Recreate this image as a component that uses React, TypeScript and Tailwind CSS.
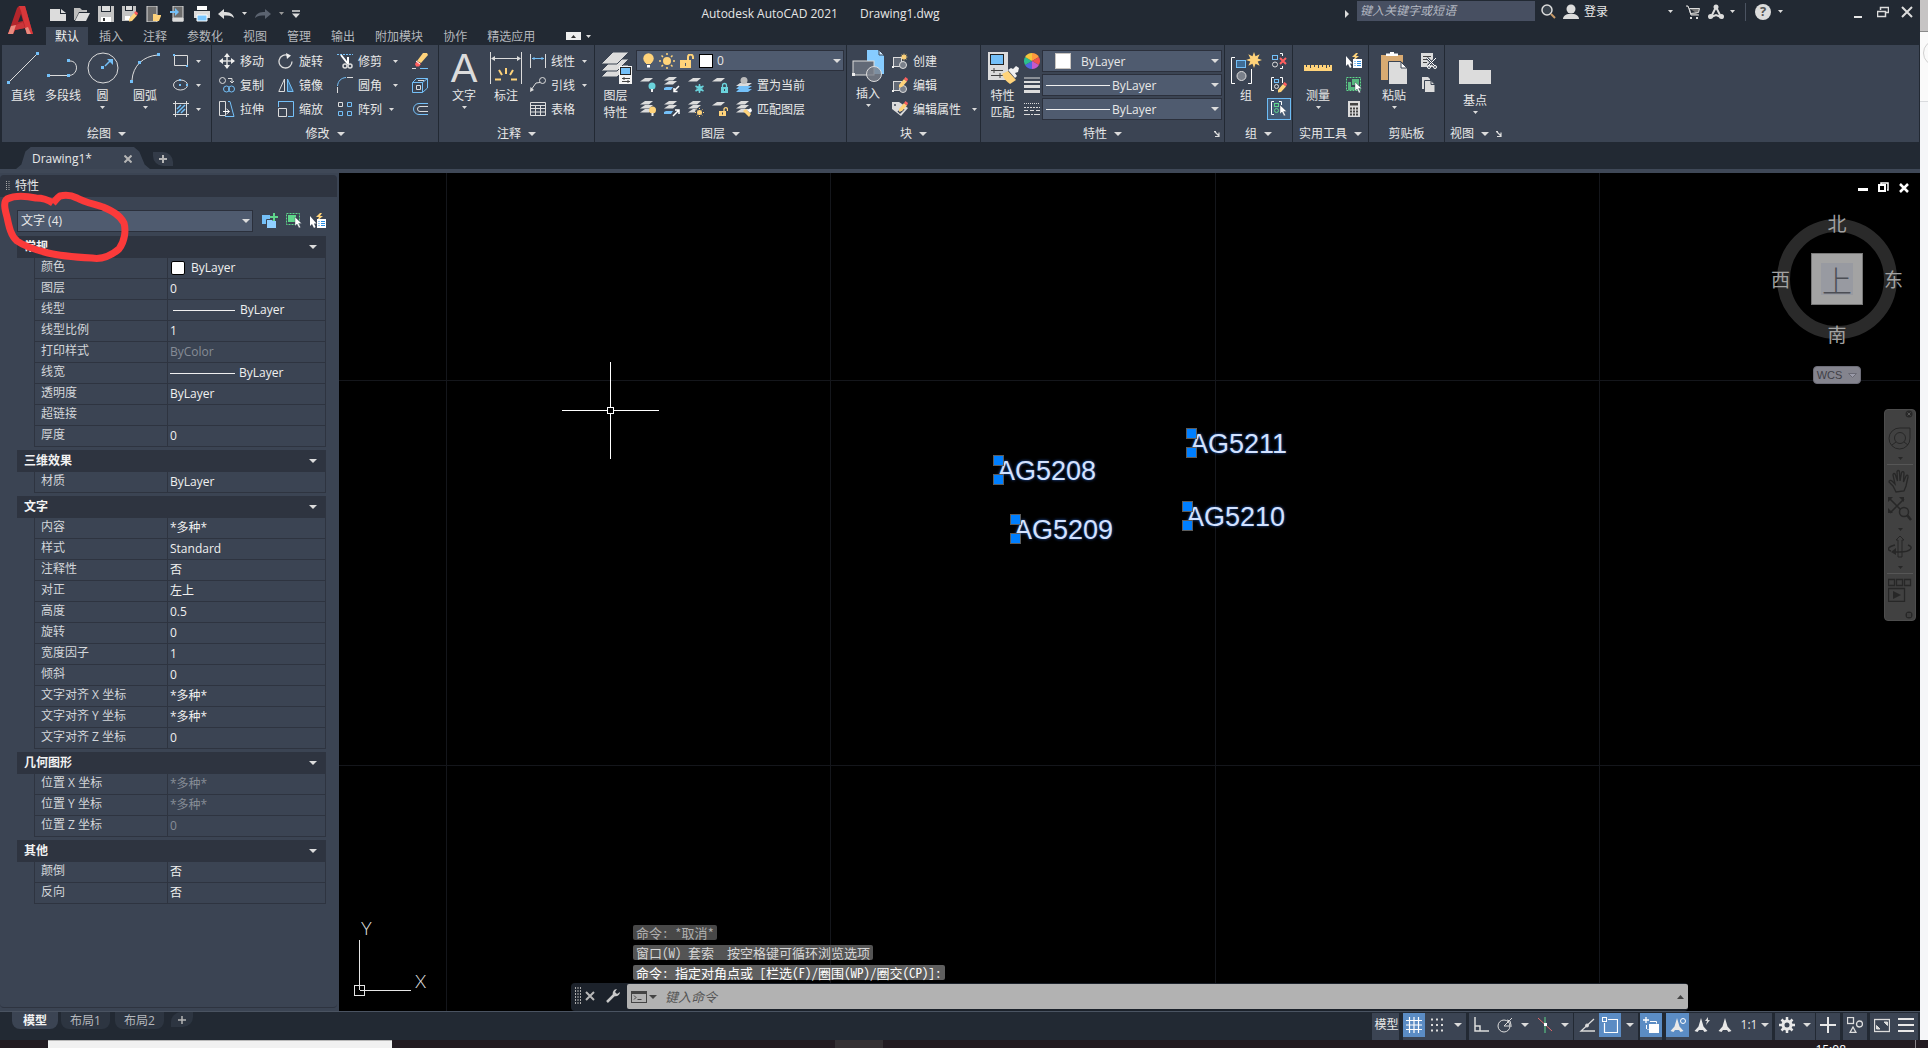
import React, { ReactNode } from 'react';

const W = '#dcdcdc';
const B = '#74c0f8';
const Y = '#ffd37a';
const G = '#5fd68b';
const R = '#ff5f5f';
const C = '#6ad3dc';

/* ---------- shared pieces ---------- */

function Ico({ children, size = 16, vb }: { children: ReactNode; size?: number; vb?: string }) {
  return (
    <svg width={size} height={size} viewBox={vb || `0 0 ${size} ${size}`} fill="none" stroke={W} strokeWidth="1" className="shrink-0" aria-hidden="true">
      {children}
    </svg>
  );
}

function Caret({ big = false, color = W }: { big?: boolean; color?: string }) {
  return big ? (
    <svg width="8" height="4" viewBox="0 0 8 4" className="shrink-0" aria-hidden="true"><path d="M0 0h8L4 4z" fill={color} /></svg>
  ) : (
    <svg width="5" height="3" viewBox="0 0 5 3" className="shrink-0" aria-hidden="true"><path d="M0 0h5L2.500 3z" fill={color} /></svg>
  );
}

function Big({ icon, lines, caret, w, pad = 'pt-[3px]' }: { icon: ReactNode; lines: string[]; caret?: boolean; w: string; pad?: string }) {
  return (
    <button type="button" className={`flex shrink-0 flex-col items-center ${w} ${pad}`}>
      {icon}
      <span className="mt-[3px] flex flex-col leading-[17px] whitespace-nowrap">
        {lines.map((l) => <span key={l}>{l}</span>)}
      </span>
      {caret && <span className="mt-[2px] flex"><Caret /></span>}
    </button>
  );
}

function Small({ icon, label, caret, wide, name }: { icon: ReactNode; label?: string; caret?: boolean; wide?: boolean; name?: string }) {
  return (
    <button type="button" aria-label={label || name} className="flex h-6 items-center gap-[5px] whitespace-nowrap">
      {icon}
      {label && <span className="pt-[2px]">{label}</span>}
      {caret && <span className={wide ? 'ml-1.5 flex' : 'ml-[2px] flex'}><Caret /></span>}
    </button>
  );
}

function Launcher() {
  return (
    <Ico size={6}><path d="M0 .5h2M.5 .5l4 4M5 1.500v4H1" strokeWidth="1.200" /></Ico>
  );
}

function Panel({ title, w, children, caret = true, launcher, left }: { title: string; w: string; children: ReactNode; caret?: boolean; launcher?: boolean; left?: boolean }) {
  return (
    <section className={`relative flex flex-col bg-[#3b4453] ${w}`}>
      <div className="flex h-[76px] pt-1">{children}</div>
      <div className={`flex h-[21px] items-center gap-[7px] pt-[4px] ${left ? 'pl-[5px]' : 'justify-center'}`}>
        <button type="button" className="flex items-center gap-[7px]">
          {title}
          {caret && <Caret big />}
        </button>
        {launcher && <span className={left ? 'flex' : 'absolute right-1 bottom-[5px]'}><Launcher /></span>}
      </div>
    </section>
  );
}

/* ---------- small drawings ---------- */

const sheet = (y: number, c: string = W, x = 0) => <path d={`M${x + 5} ${y}h8l-4 3.500H${x}z`} fill={c} stroke="none" />;
const pencil = (
  <g stroke="none"><path d="M7 13l5-6 3 2.500-5 5.500-3 .5z" fill={Y} /><path d="M12 7l1.500-2L16 7l-1 2.500z" fill={R} /></g>
);
const cursor = (x: number, y: number) => (
  <path d={`M${x} ${y}v9l2-2 2 4 1.500-.8-1.800-3.700h3z`} fill="#fff" stroke="#3b4453" strokeWidth=".4" />
);
const star = (cx: number, cy: number, r: number, c = Y) => {
  const pts: string[] = [];
  for (let i = 0; i < 16; i++) {
    const a = (i * Math.PI) / 8;
    const q = i % 2 ? r * 0.5 : r;
    pts.push(`${(cx + q * Math.sin(a)).toFixed(2)},${(cy - q * Math.cos(a)).toFixed(2)}`);
  }
  return <polygon points={pts.join(' ')} fill={c} stroke="none" />;
};
const dot = (x: number, y: number, s = 3, c = B) => <rect x={x} y={y} width={s} height={s} fill={c} stroke="none" />;

const QuickSelect = (
  <Ico><path d="M10 0L6 4h3L7 8l6-5h-3l2-3z" fill={Y} stroke="none" /><path d="M0 3v10l2-2 2 4 1.500-1-1.500-3.500h2.500z" fill="#fff" stroke="none" /><rect x="7" y="6" width="9" height="9" fill="#fff" stroke="none" /><path d="M8.500 8.500h1M8.500 10.500h1M8.500 12.500h1M11 8.500h4M11 10.500h4M11 12.500h4" stroke="#2b8de0" /></Ico>
);

const Brush = <g stroke="none"><path d="M15 22l6-3 8 9-6 4c-3-2-6-5-8-10z" fill={Y} /><path d="M21 18l3-2 2 1 3-3 3 2-1 4-3 1 2 3-2 2z" fill="#f1f1f1" /></g>;

/* ---------- title bar ---------- */

function TitleBar() {
  const quick: [string, ReactNode][] = [
    ['新建', <Ico><path d="M0 3h10v5h6v7H0z M11 3l5 4h-5z" fill={W} stroke="none" /></Ico>],
    ['打开', <Ico><path d="M0 2h6l2 2h5v2H5l-4 8H0z" fill="#bdbdbd" stroke="none" /><path d="M5 7h11l-4 8H1z" fill={W} stroke="none" /></Ico>],
    ['保存', <Ico><path d="M0 0h3v6h10V0h3v16H0z" fill="#c4c4c4" stroke="none" /><path d="M4 0h8v5H4z" fill={W} stroke="none" /><path d="M3 11h10v5H3z" fill="#fff" stroke="none" /><path d="M5 12h2v3H5z" fill="#333" stroke="none" /></Ico>],
    ['另存为', <Ico><path d="M0 0h3v5h8V0h3v7l-5 6v2H0z" fill="#c4c4c4" stroke="none" /><path d="M4 0h6v4H4z" fill={W} stroke="none" /><path d="M3 10h5v4H3z" fill="#fff" stroke="none" />{pencil}</Ico>],
    ['从移动设备打开', <Ico><rect x="1" y="0" width="10" height="16" fill="#6d6d6d" stroke={W} /><path d="M7 8h3l1 1h4v1l-2 5H7z" fill={Y} stroke="none" /></Ico>],
    ['保存到移动设备', <Ico><rect x="3" y="0" width="10" height="15" fill="#6d6d6d" stroke={W} /><path d="M3 12h10v3H3z" fill={W} /><path d="M0 5h5V2l4 4-4 4V7H0z" fill={B} stroke="none" /></Ico>],
    ['打印', <Ico><path d="M3 0h10v4H3z" fill="#fff" stroke="none" /><path d="M0 5h16v7H0z" fill={W} stroke="none" /><path d="M3 9h10v6H3z" fill="#7cc8ff" stroke="#fff" /></Ico>],
    ['放弃', <Ico><path d="M0 8l6-5v3c5 0 9 1 10 6-3-2.500-6-2.500-10-2.500V13z" fill={W} stroke="none" /></Ico>],
  ];
  return (
    <div className="flex h-[27px] items-center">
      <div className="flex w-[294px] shrink-0 items-center gap-2 pl-1">
        {quick.map(([n, i]) => (
          <button key={n} type="button" aria-label={n} className="flex">{i}</button>
        ))}
        <button type="button" aria-label="放弃列表" className="flex"><Caret /></button>
        <button type="button" aria-label="重做" className="flex"><Ico><path d="M16 8l-6-5v3C5 6 1 7 0 12c3-2.500 6-2.500 10-2.500V13z" fill="#5b6370" stroke="none" /></Ico></button>
        <button type="button" aria-label="重做列表" className="flex"><Caret color="#999" /></button>
        <button type="button" aria-label="自定义" className="flex"><Ico size={8}><path d="M0 1h8" strokeWidth="1.500" /><path d="M0 3.500h8L4 8z" fill={W} stroke="none" /></Ico></button>
      </div>
      <div className="flex flex-1 justify-center gap-[22px] pr-11 whitespace-nowrap text-[#e6e6e6]">
        <h1>Autodesk AutoCAD 2021</h1>
        <span>Drawing1.dwg</span>
      </div>
      <div className="flex w-[575px] shrink-0 items-center">
        <svg width="5" height="8" viewBox="0 0 5 8" className="mr-[7px]" aria-hidden="true"><path d="M0 0v8l4-4z" fill={W} /></svg>
        <input aria-label="搜索" placeholder="键入关键字或短语" className="mb-1.5 h-5 w-[178px] bg-[#474f61] pl-[3px] italic outline-none placeholder:text-[#b3b8c1] placeholder:italic" />
        <div className="flex flex-1 items-center pb-1">
          <button type="button" aria-label="查找" className="ml-1.5 flex"><Ico><circle cx="6" cy="6" r="5" strokeWidth="1.500" fill="#39424c" /><path d="M10 10l4 4" stroke="#c89a68" strokeWidth="2" /></Ico></button>
          <button type="button" className="ml-[6px] flex items-center gap-[5px]">
            <Ico><circle cx="8" cy="5" r="4.500" fill={W} stroke="none" /><path d="M0 15c0-3 3-4.500 5-5h6c2 .5 5 2 5 5z" fill={W} stroke="none" /></Ico>
            登录
          </button>
          <button type="button" aria-label="登录选项" className="ml-[60px] flex"><Caret /></button>
          <button type="button" aria-label="应用商店" className="ml-[13px] flex"><Ico size={14}><path d="M0 1h2l3 9h8M3.500 3.500h10l-1 4-8 1z" fill="#777" /><path d="M4 12h2v2H4zM10 12h2v2h-2z" fill={W} stroke="none" /></Ico></button>
          <button type="button" aria-label="Autodesk" className="ml-2 flex items-center gap-[6px]"><Ico><path d="M8 3L3 13l5-2 5 2z" strokeWidth="2" /><circle cx="8" cy="3" r="2.500" fill={W} stroke="none" /><circle cx="2.500" cy="12.500" r="2.500" fill={W} stroke="none" /><circle cx="13.500" cy="12.500" r="2.500" fill={W} stroke="none" /></Ico><Caret /></button>
          <div className="ml-[10px] h-[18px] w-px bg-[#4b5361]" />
          <button type="button" aria-label="帮助" className="ml-[9px] flex items-center gap-[7px]">
            <span className="flex size-4 items-center justify-center rounded-full bg-[#dcdcdc] text-[13px] leading-none font-bold text-[#555]">?</span>
            <Caret />
          </button>
          <div className="flex flex-1 items-center justify-end gap-3 pr-[7px] text-[#e6e6e6]">
            <button type="button" aria-label="最小化" className="mt-2.5 h-[2px] w-2 bg-[#e6e6e6]" />
            <button type="button" aria-label="还原" className="ml-[3px] flex"><Ico size={12}><path d="M3.500 4V1.500h8v5H9M.5 5.500h8v5h-8z" strokeWidth="1.500" /></Ico></button>
            <button type="button" aria-label="关闭" className="flex"><Ico size={12}><path d="M1 1l10 10M11 1L1 11" strokeWidth="2" /></Ico></button>
          </div>
        </div>
      </div>
    </div>
  );
}

function RibbonTabs() {
  const tabs = ['默认', '插入', '注释', '参数化', '视图', '管理', '输出', '附加模块', '协作', '精选应用'];
  return (
    <nav className="flex h-[18px] items-center gap-[2px] text-[#b5b8bd]">
      {tabs.map((t, i) => (
        <button key={t} type="button" className={`h-[18px] px-[9px] leading-[17px] ${i === 0 ? 'bg-[#3b4453] text-[#f0f0f0]' : ''}`}>{t}</button>
      ))}
      <button type="button" aria-label="功能区显示" className="ml-5 flex items-center gap-[5px]">
        <span className="flex h-2 w-[15px] items-center justify-center bg-[#eee]"><svg width="5" height="3" aria-hidden="true"><path d="M0 3h5L2.500 0z" fill="#333" /></svg></span>
        <Caret />
      </button>
    </nav>
  );
}

function Header() {
  return (
    <header className="flex shrink-0">
      <button type="button" aria-label="应用程序菜单" className="flex w-[46px] shrink-0 items-start pt-1.5 pl-2">
        <svg width="25" height="28" viewBox="0 0 25 28" aria-hidden="true">
          <path d="M0 28L9 2l2-2h6l8 28h-6l-2-6-10 2-2 4z" fill="#b3262c" />
          <path d="M11 0h6l8 28h-6L13 5z" fill="#d8373a" />
          <path d="M3 21l12-5 2 6-10 2-2 4H0z" fill="#c9353a" />
          <path d="M10 16l3-8 2 7z" fill="#222933" />
          <path d="M0 28l3-8 5-1-3 9z" fill="#e98a7e" />
          <path d="M17 22l3-1 3 7h-4z" fill="#e98a7e" />
        </svg>
      </button>
      <div className="min-w-0 flex-1">
        <TitleBar />
        <RibbonTabs />
      </div>
    </header>
  );
}

/* ---------- ribbon ---------- */

function LayerPanel() {
  const row1: [string, ReactNode][] = [
    ['关闭图层', <Ico>{sheet(1)}<circle cx="12" cy="9" r="3.500" fill={C} stroke="none" /><path d="M11 12h2v3h-2z" fill="#eee" stroke="none" /></Ico>],
    ['隔离图层', <Ico>{sheet(0)}{sheet(4)}<path d="M0 11l2-1h7l-2 3H0z" fill={B} stroke="none" /><path d="M15 9l-5 5M10 11v3.500h3.500" strokeWidth="1.500" stroke="#fff" /></Ico>],
    ['冻结图层', <Ico>{sheet(1)}<path d="M11.500 7v9M7.500 9l8 5M15.500 9l-8 5" stroke={C} strokeWidth="1.500" /><circle cx="11.500" cy="11.500" r="2.500" stroke={C} /></Ico>],
    ['锁定图层', <Ico>{sheet(1)}<path d="M10.500 10V8.500a2 2 0 0 1 4 0V10" stroke={C} strokeWidth="1.300" /><rect x="9" y="10" width="7" height="6" fill={C} stroke="none" /><path d="M12 12h1v2h-1z" fill="#3b4453" stroke="none" /></Ico>],
  ];
  const row2: [string, ReactNode][] = [
    ['打开所有图层', <Ico>{sheet(0)}{sheet(4)}{sheet(8)}<circle cx="12.500" cy="9" r="3.500" fill={Y} stroke="none" /><path d="M11.500 12h2v3h-2z" fill="#eee" stroke="none" /></Ico>],
    ['取消隔离', <Ico>{sheet(0)}{sheet(4)}<path d="M0 11l2-1h7l-2 3H0z" fill={B} stroke="none" /><path d="M9 15l6-6M11 9h4v4" strokeWidth="1.500" stroke="#fff" /></Ico>],
    ['解冻所有图层', <Ico>{sheet(0)}{sheet(4)}{sheet(8)}<circle cx="11.500" cy="11.500" r="4.500" fill="#3b4453" stroke="none" /><circle cx="11.500" cy="11.500" r="2.500" fill={Y} stroke="none" /><path d="M11.500 7v9M7 11.500h9M8.500 8.500l6 6M14.500 8.500l-6 6" stroke={Y} strokeDasharray="1 1" /></Ico>],
    ['解锁图层', <Ico>{sheet(1)}<path d="M12 10V8a1.800 1.800 0 0 1 3.500 0v2" stroke={Y} strokeWidth="1.300" /><rect x="7" y="10" width="7" height="5" fill={Y} stroke="none" /><path d="M10 11.500h1v2h-1z" fill="#3b4453" stroke="none" /></Ico>],
  ];
  return (
    <Panel title="图层" w="w-[251px]">
      <Big w="w-[41px]" lines={['图层', '特性']} icon={
        <Ico size={32}>
          {[13, 7, 0].map((y) => <path key={y} d={`M13 ${y}h16L17 ${y + 12}H1z`} fill={W} stroke="#3b4453" />)}
          <rect x="19" y="14" width="13" height="18" fill="#f4f4f4" stroke="none" />
          <rect x="20.500" y="15.500" width="10" height="7" fill={B} stroke="#222" />
          <path d="M22 26.500h8M24 25v3M22 29.500h8M28 28v3" stroke="#444" />
        </Ico>} />
      <div className="min-w-0 flex-1 pr-[2px]">
        <div className="pt-px pb-[2px]">
          <div className="relative flex h-[21px] items-center border border-[#2b303c] bg-[#4f5b6f]">
            <span className="pointer-events-none absolute left-1.5 flex items-center gap-[5px]">
              <svg width="11" height="15" viewBox="0 0 11 15" className="shrink-0" aria-hidden="true"><circle cx="5.500" cy="5.500" r="5.200" fill={Y} /><path d="M3 9h5v2H3z" fill={Y} /><path d="M4 12h3v2.500H4z" fill="#fff" /></svg>
              <Ico><circle cx="8" cy="8" r="4" fill={Y} stroke="none" /><path d="M8 0v2M8 14v2M0 8h2M14 8h2M2.500 2.500l1.500 1.500M12 12l1.500 1.500M13.500 2.500L12 4M4 12l-1.500 1.500" stroke={Y} strokeWidth="1.500" /></Ico>
              <Ico size={14}><path d="M8 6V3a2.500 2.500 0 0 1 5 0v2" stroke={Y} strokeWidth="2" /><path d="M0 6h11v8H0zM5 9v3h1V9z" fill={Y} fillRule="evenodd" stroke="none" /></Ico>
              <span className="size-3.5 border border-black bg-white" />
            </span>
            <select aria-label="图层" className="h-full w-full appearance-none bg-transparent pl-20 outline-none"><option>0</option></select>
            <span className="pointer-events-none absolute right-[2px]"><Caret big /></span>
          </div>
        </div>
        <div className="flex gap-2 pl-1">
          {row1.map(([n, i]) => <Small key={n} name={n} icon={i} />)}
          <Small label="置为当前" icon={<Ico><path d="M3 9h13l-4 3H0zM3 12h13l-4 3H0z" fill={B} stroke="none" /><path d="M4 6h12l-4 3H0z" fill={W} stroke="none" /><circle cx="8" cy="3.500" r="3.500" fill="#bbb" stroke="none" /></Ico>} />
        </div>
        <div className="flex gap-2 pl-1">
          {row2.map(([n, i]) => <Small key={n} name={n} icon={i} />)}
          <Small label="匹配图层" icon={<Ico>{sheet(0)}{sheet(4)}{sheet(8)}<path d="M7 10l3-2 5 5-2 3z" fill={Y} stroke="none" /><path d="M11 9l4-2 1 3-2 2z" fill="#fff" stroke="none" /></Ico>} />
        </div>
      </div>
    </Panel>
  );
}

function PropCombo({ label, kind }: { label: string; kind: 'swatch' | 'line' }) {
  return (
    <div className="relative flex h-[22px] items-center border border-[#2b303c] bg-[#4f5b6f]">
      {kind === 'swatch'
        ? <span className="pointer-events-none absolute left-3 size-4 border border-[#c8c4c0] bg-white" />
        : <span className="pointer-events-none absolute left-[3px] h-px w-16 bg-[#f0f0f0]" />}
      <select aria-label={label} className={`h-full w-full appearance-none bg-transparent pt-[2px] outline-none ${kind === 'swatch' ? 'pl-[38px]' : 'pl-[69px]'}`}><option>ByLayer</option></select>
      <span className="pointer-events-none absolute right-[2px]"><Caret big /></span>
    </div>
  );
}

function Ribbon() {
  return (
    <div className="flex shrink-0 gap-px overflow-hidden pr-px pl-[2px]">
      <Panel title="绘图" w="w-[209px]">
        <Big w="w-[42px]" lines={['直线']} icon={<Ico size={32}><path d="M2 30L30 2" />{dot(0, 29)}{dot(29, 0)}</Ico>} />
        <Big w="w-[38px]" lines={['多段线']} icon={<Ico size={32}><path d="M2 23.500h19M22 9c10-1 10 14 0 14.500" />{dot(0, 22)}{dot(20, 22)}{dot(20, 7)}</Ico>} />
        <Big w="w-[41px]" lines={['圆']} caret icon={<Ico size={32}><circle cx="16" cy="16" r="15" />{dot(14, 14)}<path d="M18 14l6-6" stroke={B} strokeWidth="1.500" /><path d="M20 7h6v6z" fill={B} stroke="none" /></Ico>} />
        <Big w="w-[44px]" lines={['圆弧']} caret icon={<Ico size={32}><path d="M3 28C4 14 14 4 29 3" />{dot(1, 28)}{dot(9, 9)}{dot(28, 1)}</Ico>} />
        <div className="ml-1.5">
          <Small name="矩形" caret icon={<Ico><path d="M1.500 2.500h13v10h-13z" />{dot(0, 1, 2)}{dot(13, 12, 2)}</Ico>} />
          <Small name="椭圆" caret icon={<Ico><ellipse cx="7.500" cy="8" rx="7" ry="5" />{dot(6, 2, 2)}{dot(6, 7, 2)}{dot(13, 7, 2)}</Ico>} />
          <Small name="图案填充" caret icon={<Ico><path d="M2.500 0v16M13.500 0v16M0 2.500h16M0 13.500h16" /><path d="M4 8l4-4M4 12l8-8M8 12l4-4" stroke={B} strokeWidth="1.500" /></Ico>} />
        </div>
      </Panel>

      <Panel title="修改" w="w-[226px]">
        <div className="ml-[7px] w-[59px] shrink-0">
          <Small label="移动" icon={<Ico><path d="M8 1v14M1 8h14" strokeWidth="1.500" /><path d="M8 0l3 4H5zM8 16l3-4H5zM0 8l4-3v6zM16 8l-4-3v6z" fill="#eee" stroke="none" /></Ico>} />
          <Small label="复制" icon={<Ico><circle cx="3.500" cy="3.500" r="3" /><path d="M9 1.500h4v4M11 4l2 2 2-2" /><circle cx="7.500" cy="12" r="3" stroke={B} /><circle cx="12.500" cy="12" r="3" stroke={B} /></Ico>} />
          <Small label="拉伸" icon={<Ico><path d="M.5 .5h6v14h-6z" /><path d="M9 .5h2l4 15H6" stroke={B} /><path d="M4 10.500h6M7.500 8l3 2.500-3 2.500" stroke="#fff" /></Ico>} />
        </div>
        <div className="w-[59px] shrink-0">
          <Small label="旋转" icon={<Ico><path d="M10 2.500a6.500 6.500 0 1 0 4 6" strokeWidth="1.300" /><path d="M8 0l5 2.500L9 6z" fill="#eee" stroke="none" /></Ico>} />
          <Small label="镜像" icon={<Ico><path d="M6.500 2v12.500H.8z" /><path d="M9.500 2v12.500h5.700z" stroke={B} fill="#3f6c94" /></Ico>} />
          <Small label="缩放" icon={<Ico><path d="M0 .5h15.500v15H10M.5 0v6" stroke={B} /><path d="M.5 7.500h8v8h-8z" /></Ico>} />
        </div>
        <div className="w-[75px] shrink-0">
          <Small label="修剪" caret wide icon={<Ico><path d="M0 1.500h16" stroke={B} strokeDasharray="2 1" /><path d="M4 2l7 9M11 4v7" stroke="#fff" strokeWidth="2" /><circle cx="8" cy="13" r="2" strokeWidth="1.500" /><circle cx="13" cy="13" r="2" strokeWidth="1.500" /></Ico>} />
          <Small label="圆角" caret wide icon={<Ico><path d="M.5 9C1 4 4 1 9 .5" stroke={B} /><path d="M10 .5h6M.5 10v6" /></Ico>} />
          <Small label="阵列" caret icon={<Ico><path d="M1.500 1.500h4v4h-4z" /><path d="M10.500 1.500h4v4h-4zM1.500 10.500h4v4h-4zM10.500 10.500h4v4h-4z" stroke={B} /></Ico>} />
        </div>
        <div>
          <Small name="删除" icon={<Ico><path d="M5 8l6-8h4l1 2-7 8z" fill={Y} stroke="none" /><path d="M5 8l4 3-2 2.500H4L3 11z" fill={R} stroke="none" /><path d="M4 8l4 3" stroke="#fff" /><path d="M0 15.500h4" /><path d="M8 15.500h8" stroke={B} /></Ico>} />
          <Small name="分解" icon={<Ico><path d="M.5 5.500h10v10H.5zM.5 5.500l4-4h11M10.500 5.500l5-4v9.500l-5 4.500" stroke={B} /><path d="M4.500 8.500h4v4h-4zM6 3.500h6" /></Ico>} />
          <Small name="偏移" icon={<Ico><path d="M16 2.500H7a5.500 5.500 0 0 0 0 11h9" stroke={B} /><path d="M16 5.500H8a2.500 2.500 0 0 0 0 5h8" /></Ico>} />
        </div>
      </Panel>

      <Panel title="注释" w="w-[155px]">
        <Big w="w-[50px]" lines={['文字']} caret icon={<span className="flex h-8 items-center font-['Liberation_Sans',sans-serif] text-[40px] leading-8 text-[#dcdcdc]">A</span>} />
        <Big w="w-[34px]" lines={['标注']} icon={
          <Ico size={32}>
            <path d="M.5 0v32M31.500 0v32" /><path d="M2 6.500h28" /><path d="M1 6.500l4-2.500v5zM31 6.500L27 4v5z" fill={W} stroke="none" />
            <path d="M16 16v6M9 18l3 5M23 18l-3 5M5 27.500h6M21 27.500h6" stroke={Y} strokeWidth="2" />
          </Ico>} />
        <div className="ml-[7px]">
          <Small label="线性" caret icon={<Ico><path d="M.5 1v14M15.500 1v14" /><path d="M2 5.500h12M4 4v3M12 4v3" stroke={B} /></Ico>} />
          <Small label="引线" caret icon={<Ico><circle cx="12.500" cy="3.500" r="3" /><path d="M10 5.500L6 6l-5 7" /><path d="M0 15l.5-5 3.500 3z" fill={W} stroke="none" /></Ico>} />
          <Small label="表格" icon={<Ico><path d="M.5 1.500h15v13H.5zM.5 4.500h15M.5 7.500h15M.5 11h15M5.500 4.500v10M10.500 4.500v10" /></Ico>} />
        </div>
      </Panel>

      <LayerPanel />

      <Panel title="块" w="w-[133px]">
        <Big w="w-[42px]" pad="pt-px" lines={['插入']} caret icon={
          <Ico size={32}>
            <path d="M15 0h11l6 6v18H15z" fill="#86ccff" stroke="none" /><path d="M27 0v5h5z" fill="#cfe9ff" stroke="#3b4453" />
            <rect x="1" y="11" width="21" height="14" fill="#626a77" /><circle cx="22" cy="24" r="7.500" fill="#7a808acc" />{dot(0, 23, 3, '#eee')}
          </Ico>} />
        <div className="ml-[3px]">
          <Small label="创建" icon={<Ico><rect x="1.500" y="4.500" width="8" height="9" fill="#626a77" /><circle cx="11" cy="12" r="3.500" fill="#7a808a" />{star(12, 4, 4)}{dot(0, 13, 2, '#eee')}</Ico>} />
          <Small label="编辑" icon={<Ico><rect x="1.500" y="4.500" width="8" height="9" fill="#626a77" /><circle cx="11" cy="12" r="3.500" fill="#7a808a" /><g transform="translate(0 -5)">{pencil}</g>{dot(0, 13, 2, '#eee')}</Ico>} />
          <Small label="编辑属性" caret wide icon={<Ico><path d="M0 1h7l9 6-7 8L0 8z" fill={W} stroke="none" /><circle cx="3" cy="4" r="1" fill="#3b4453" stroke="none" /><path d="M6 10l2 2 4-4" stroke="#3b4453" strokeWidth="1.500" /><g transform="translate(0 -5)">{pencil}</g></Ico>} />
        </div>
      </Panel>

      <Panel title="特性" w="w-[243px]" launcher>
        <Big w="w-[43px]" lines={['特性', '匹配']} icon={
          <Ico size={32}>
            <rect x="1" y="0" width="20" height="28" fill={W} stroke="none" /><rect x="3.500" y="2.500" width="13" height="10" fill={B} stroke="#222" />
            <path d="M4 18.500h12M7 16v5M4 23.500h12M13 21v5" stroke="#444" />{Brush}
          </Ico>} />
        <div className="w-[18px] shrink-0">
          <Small name="对象颜色" icon={<Ico><g stroke="none"><path d="M8 8L8 0a8 8 0 0 1 6.900 4z" fill="#ff9a3d" /><path d="M8 8l6.900-4a8 8 0 0 1 0 8z" fill="#f0524f" /><path d="M8 8l6.900 4A8 8 0 0 1 8 16z" fill="#c659c9" /><path d="M8 8v8a8 8 0 0 1-6.900-4z" fill="#5166e0" /><path d="M8 8l-6.900 4a8 8 0 0 1 0-8z" fill="#2dbf8d" /><path d="M8 8L1.100 4A8 8 0 0 1 8 0z" fill="#f3c53c" /></g></Ico>} />
          <Small name="线宽" icon={<Ico><path d="M0 1h16" /><path d="M0 5h16" strokeWidth="2" /><path d="M0 9.500h16" strokeWidth="3" /><path d="M0 14.500h16" strokeWidth="3" /></Ico>} />
          <Small name="线型" icon={<Ico><path d="M0 2.500h16" strokeDasharray="1 1" /><path d="M0 6.500h16" strokeDasharray="2 1" /><path d="M0 9.500h16" strokeDasharray="4 2" /><path d="M0 13.500h16" strokeDasharray="6 1 2 1" /></Ico>} />
        </div>
        <div className="flex min-w-0 flex-1 flex-col gap-[2px] pt-px pr-[2px]">
          <PropCombo label="对象颜色" kind="swatch" />
          <PropCombo label="线宽" kind="line" />
          <PropCombo label="线型" kind="line" />
        </div>
      </Panel>

      <Panel title="组" w="w-[67px]">
        <Big w="w-[42px]" lines={['组']} icon={
          <Ico size={32}>
            <path d="M5 5.500H1.500v26H5M18 31.500h3.500V17" stroke="#fff" /><rect x="6.500" y="8.500" width="9" height="7" fill="#3f6c94" stroke={B} /><circle cx="11.500" cy="24" r="4.500" fill="#7a808a" />{star(24, 8, 8)}
          </Ico>} />
        <div className="flex w-6 flex-col items-center">
          <Small name="解除编组" icon={<Ico><rect x="1.500" y="2.500" width="5" height="4" stroke={B} /><circle cx="4" cy="11.500" r="2.500" /><path d="M9 .5h2.500V3M9 15.500h2.500V13" stroke="#fff" /><path d="M9 5l6 6M15 5l-6 6" stroke={R} strokeWidth="2" /></Ico>} />
          <Small name="组编辑" icon={<Ico><path d="M3 .5H.5v13H3M9 .5h2.500V6" stroke="#fff" /><rect x="3.500" y="2.500" width="4" height="3" stroke={B} /><circle cx="5.500" cy="9.500" r="2" />{pencil}</Ico>} />
          <button type="button" aria-label="启用组选择" className="mt-px flex h-[22px] w-6 items-center justify-center border border-[#6cbcf5] bg-[#435a75]"><Ico><path d="M3 .5H.5v13H3M8 .5h2.500V4" stroke="#fff" /><rect x="3.500" y="2.500" width="4" height="3" stroke={G} /><circle cx="5.500" cy="9.500" r="2" stroke={G} />{cursor(9, 4)}</Ico></button>
        </div>
      </Panel>

      <Panel title="实用工具" w="w-[75px]">
        <Big w="w-[50px]" lines={['测量']} caret icon={<Ico size={32}><rect x="2" y="13" width="28" height="6" fill={Y} stroke="none" /><path d="M4.500 13v2M8.500 13v3M12.500 13v2M16.500 13v3M20.500 13v2M24.500 13v3M27.500 13v2" stroke="#3b4453" /></Ico>} />
        <div className="flex w-[22px] flex-col items-center">
          <Small name="快速选择" icon={QuickSelect} />
          <Small name="全部选择" icon={<Ico><rect x=".5" y=".5" width="14" height="13" stroke={G} strokeDasharray="2 1" /><path d="M2 5h3v5h6v3H2zM6 2h7v6H6z" fill={G} stroke="none" opacity=".8" />{cursor(9, 5)}</Ico>} />
          <Small name="快速计算器" icon={<Ico><rect x="2" y="0" width="12" height="16" fill={W} stroke="none" /><path d="M4 2h8v2.500H4z" fill="#444" stroke="none" /><path d="M4 7.500h8M4 10.500h8M4 13.500h8" stroke="#444" strokeWidth="2" strokeDasharray="2 1" /></Ico>} />
        </div>
      </Panel>

      <Panel title="剪贴板" w="w-[75px]" caret={false}>
        <Big w="w-[50px]" lines={['粘贴']} caret icon={
          <Ico size={32}>
            <path d="M3 3h22v25H3z" fill="#d9ab72" stroke="none" /><path d="M8 4V1.500h4V0h4v1.500h4V4z" fill="#fff" stroke="none" />
            <path d="M10.500 9.500H23l6.500 6.500v16.500h-19z" fill={W} stroke="#3b4453" /><path d="M23 10v6h6z" fill="#fff" stroke="#3b4453" />
          </Ico>} />
        <div className="flex w-5 flex-col items-center">
          <Small name="剪切" icon={<Ico><rect x="0" y="0" width="12" height="14" fill={W} stroke="none" /><path d="M2 3.500h8M2 6.500h5M2 9.500h4" stroke="#444" /><path d="M6 5l8 8M15 5l-8 8" stroke="#3b4453" strokeWidth="2.500" /><path d="M6 5l8 8M15 5l-8 8" stroke="#fff" /><circle cx="8" cy="14" r="1.500" stroke="#fff" /><circle cx="14" cy="14" r="1.500" stroke="#fff" /></Ico>} />
          <Small name="复制剪裁" icon={<Ico><path d="M1 0h6l2 2v10H1z" fill={W} stroke="none" /><path d="M3.500 3.500H10l4 4v8H3.500z" fill={W} stroke="#3b4453" /><path d="M10 3.500v4h4" stroke="#3b4453" /></Ico>} />
        </div>
      </Panel>

      <Panel title="视图" w="min-w-[80px] flex-1" launcher left>
        <Big w="w-[60px]" pad="pt-2" lines={['基点']} caret icon={<Ico size={32}><path d="M0 3h14v10h18v14H0z" fill={W} stroke="none" /></Ico>} />
      </Panel>
    </div>
  );
}

/* ---------- document tabs ---------- */

function DocTabs() {
  return (
    <div className="flex h-[27px] shrink-0 items-end pl-4">
      <div className="flex h-[22px] w-[134px] items-center justify-between bg-[#3b4453] pt-px pr-[18px] pl-4 [clip-path:polygon(0%_100%,4%_80%,7%_20%,11%_0%,88%_0%,92%_20%,96%_80%,100%_100%)]">
        <span>Drawing1*</span>
        <button type="button" aria-label="关闭图形" className="flex"><Ico size={8}><path d="M.5 .5l7 7M7.500 .5l-7 7" stroke="#b5b5b5" strokeWidth="2" /></Ico></button>
      </div>
      <button type="button" aria-label="新图形" className="mb-[3px] ml-[3px] flex h-[14px] w-5 items-center justify-center rounded-tr-[10px] rounded-bl-[10px] bg-[#333b48]"><Ico size={8}><path d="M4 0v8M0 4h8" stroke="#b5b5b5" strokeWidth="2" /></Ico></button>
    </div>
  );
}

/* ---------- properties palette ---------- */

type Row = { k: string; v: string; kind?: 'swatch' | 'line' | 'wideline'; dim?: boolean };
const sections: { title: string; rows: Row[] }[] = [
  {
    title: '常规',
    rows: [
      { k: '颜色', v: 'ByLayer', kind: 'swatch' },
      { k: '图层', v: '0' },
      { k: '线型', v: 'ByLayer', kind: 'line' },
      { k: '线型比例', v: '1' },
      { k: '打印样式', v: 'ByColor', dim: true },
      { k: '线宽', v: 'ByLayer', kind: 'wideline' },
      { k: '透明度', v: 'ByLayer' },
      { k: '超链接', v: '' },
      { k: '厚度', v: '0' },
    ],
  },
  { title: '三维效果', rows: [{ k: '材质', v: 'ByLayer' }] },
  {
    title: '文字',
    rows: [
      { k: '内容', v: '*多种*' },
      { k: '样式', v: 'Standard' },
      { k: '注释性', v: '否' },
      { k: '对正', v: '左上' },
      { k: '高度', v: '0.5' },
      { k: '旋转', v: '0' },
      { k: '宽度因子', v: '1' },
      { k: '倾斜', v: '0' },
      { k: '文字对齐 X 坐标', v: '*多种*' },
      { k: '文字对齐 Y 坐标', v: '*多种*' },
      { k: '文字对齐 Z 坐标', v: '0' },
    ],
  },
  {
    title: '几何图形',
    rows: [
      { k: '位置 X 坐标', v: '*多种*', dim: true },
      { k: '位置 Y 坐标', v: '*多种*', dim: true },
      { k: '位置 Z 坐标', v: '0', dim: true },
    ],
  },
  { title: '其他', rows: [{ k: '颠倒', v: '否' }, { k: '反向', v: '否' }] },
];

function Palette() {
  return (
    <aside className="relative flex w-[339px] shrink-0 flex-col bg-[#3b4453] pt-[2px] pr-[2px] pb-[3px]">
      <div className="flex min-h-0 flex-1 flex-col rounded-b border-b border-[#2e3440]">
        <div className="flex h-[22px] shrink-0 items-center gap-[2px] rounded-t bg-[#2e3440] pl-[3px]">
          <Ico size={10} vb="0 0 4 10"><path d="M.5 0v10M3 0v10" stroke="#aaa" strokeDasharray="1 1" /></Ico>
          <h2>特性</h2>
        </div>
        <div className="mt-[13px] flex h-[22px] shrink-0 items-center pr-[11px] pl-[17px]">
          <div className="relative mr-[9px] flex h-[22px] flex-1 items-center border border-[#2b303c] bg-[#4f5b6f]">
            <select aria-label="选择对象类型" className="h-full w-full appearance-none bg-transparent pl-[3px] outline-none"><option>文字 (4)</option></select>
            <span className="pointer-events-none absolute right-[2px]"><Caret big /></span>
          </div>
          <div className="flex gap-2">
            <button type="button" aria-label="切换 PICKADD"><Ico><path d="M0 2h9v9H0z" fill={B} stroke="none" /><path d="M4.500 6.500h10v9h-10z" fill="#8fcfff" stroke="#3b4453" /><path d="M12.500 0v8M8 4h8" stroke="#3b4453" strokeWidth="4" /><path d="M12 0v8M8 4h8" stroke={G} strokeWidth="2" /></Ico></button>
            <button type="button" aria-label="选择对象"><Ico><rect x=".5" y=".5" width="13" height="11" stroke={G} strokeDasharray="2 1" /><path d="M2 2h8v7H2z" fill={G} stroke="none" />{cursor(9, 4)}</Ico></button>
            <button type="button" aria-label="快速选择">{QuickSelect}</button>
          </div>
        </div>
        <div className="mt-1 flex min-h-0 flex-1 flex-col gap-[3px] overflow-hidden pr-[11px] pl-[17px]">
          {sections.map((s) => (
            <section key={s.title} className="shrink-0">
              <button type="button" aria-expanded="true" className="flex h-[22px] w-full items-center justify-between bg-[#2e3440] pr-[9px] pb-px pl-[7px] font-bold text-[#f2f2f2]">
                {s.title}
                <Caret big />
              </button>
              <div className="pl-[17px]">
                <table className="w-full table-fixed border-separate border-spacing-0 border-x border-[#2e3440]">
                  <tbody>
                    {s.rows.map((r) => (
                      <tr key={r.k}>
                        <th scope="row" className="h-[21px] w-[133px] border-r border-b border-[#2e3440] p-0 pb-[3px] pl-[6px] text-left leading-4 font-normal text-[#d3d6da]">{r.k}</th>
                        <td className={`h-[21px] border-b border-[#2e3440] p-0 pl-[2px] leading-4 ${r.dim ? 'text-[#868c96]' : 'text-[#f0f0f0]'}`}>
                          <span className="flex h-4 items-center">
                            {r.kind === 'swatch' && <span className="mr-1.5 ml-px size-3.5 rounded-[2px] border border-black bg-white" />}
                            {r.kind === 'line' && <span className="mr-[5px] ml-[3px] h-px w-[62px] bg-[#f0f0f0]" />}
                            {r.kind === 'wideline' && <span className="mr-[4px] h-px w-[65px] bg-[#f0f0f0]" />}
                            {r.v}
                          </span>
                        </td>
                      </tr>
                    ))}
                  </tbody>
                </table>
              </div>
            </section>
          ))}
        </div>
      </div>
      <svg className="pointer-events-none absolute top-0 left-0" width="140" height="100" viewBox="0 0 140 100" fill="none" aria-hidden="true">
        <path d="M53 30C47 26 42 25 36 25C27 23 15 22 7 26C3 29 5 37 7 44C9 54 11 63 17 68C24 73 36 77 48 80C60 83 74 84 92 85C104 87 112 82 119 76C125 68 126 57 124 50C120 42 112 38 103 34C94 31 84 29 77 25C71 22 64 22 60 23C57 25 55 28 53 30" stroke="#fb3a3a" strokeWidth="7" strokeLinejoin="round" />
      </svg>
    </aside>
  );
}

/* ---------- drawing area ---------- */

function Entity({ text, pos }: { text: string; pos: string }) {
  return (
    <div className={`absolute ${pos}`}>
      <span className="absolute -top-px -left-[2px] font-['Liberation_Sans',Arial,sans-serif] text-[27px] leading-[26px] text-[#d3e2ff] [text-shadow:0_0_3px_#2b62c4]">{text}</span>
      <span className="absolute -top-1 -left-[6px] size-[11px] border border-[#5c5c5c] bg-[#007fff]" />
      <span className="absolute top-[15px] -left-[6px] size-[11px] border border-[#5c5c5c] bg-[#007fff]" />
    </div>
  );
}

function ViewCube() {
  return (
    <div className="absolute top-[42px] right-[18px] w-[130px] font-['Noto_Sans_CJK_SC',serif] text-[19px] leading-5 text-[#a2a2a2]">
      <div className="relative mx-auto mt-1 flex size-[120px] items-center justify-center rounded-full border-[13px] border-[#2a2a2a]">
        <button type="button" className="flex size-[52px] shrink-0 items-center justify-center border border-[#777] bg-[#a3a3a3]">
          <span className="flex size-8 items-center justify-center bg-[#989aa1] text-[30px] leading-8 font-light text-[#4c4e55]">上</span>
        </button>
        <span className="absolute -top-[19px]">北</span>
        <span className="absolute -bottom-[18px]">南</span>
        <span className="absolute -left-[19px]">西</span>
        <span className="absolute -right-[19px]">东</span>
      </div>
      <button type="button" className="mx-auto mt-[27px] flex h-[18px] w-12 items-center justify-center gap-1.5 rounded-[4px] border border-[#6d6d78] bg-[#84848e] font-['Liberation_Sans',sans-serif] text-[11px] text-[#3f3f46]">
        WCS
        <svg width="9" height="5" viewBox="0 0 9 5" aria-hidden="true"><path d="M.5 .5h8l-4 4z" fill="#9a9aa8" stroke="#6a6a75" /></svg>
      </button>
    </div>
  );
}

function NavBar() {
  const k = '#272727';
  return (
    <div className="absolute top-[236px] right-1 flex h-[212px] w-8 flex-col items-center rounded-[4px] border border-[#4d4d4d] bg-[#414141]">
      <button type="button" aria-label="关闭导航栏" className="mr-[2px] self-end"><Ico size={8}><circle cx="4" cy="4" r="3.500" fill={k} stroke="none" /><path d="M2.500 2.500l3 3M5.500 2.500l-3 3" stroke="#555" /></Ico></button>
      <button type="button" aria-label="全导航控制盘" className="mt-2"><Ico size={24}><path d="M12 2h10v10a10.500 10.500 0 1 1-10-10z" stroke={k} /><circle cx="12" cy="12" r="5.500" stroke={k} /><path d="M8 16l-4 3M16 16l4 3" stroke={k} /></Ico></button>
      <span className="mt-[7px]"><Caret color={k} /></span>
      <span className="mt-1 h-px w-[26px] shrink-0 bg-[#565656]" />
      <button type="button" aria-label="平移" className="mt-1"><Ico size={24}><path d="M8 23l-3-6-4-4c0-2 2-2 3-1l3 3-2-9c0-2 2-2 2.500 0l2 6-.5-9c0-2 2.500-2 2.500 0l.5 9 1.500-8c.5-2 2.500-1.500 2.500 0l-.5 9 2.500-6c.5-1.500 2.500-1 2 1l-2 9-2 5z" stroke={k} strokeWidth="1.300" /></Ico></button>
      <button type="button" aria-label="范围缩放" className="mt-1"><Ico size={24}><path d="M2 2l14 14M16 2L2 16" stroke={k} strokeWidth="1.500" /><path d="M0 0h5L0 5zM16 0h-5l5 5zM0 16h5l-5-5z" fill={k} stroke="none" /><circle cx="16" cy="15" r="4.500" stroke={k} fill="#414141" strokeWidth="1.500" /><path d="M19 18l4 5" stroke={k} strokeWidth="2.500" /></Ico></button>
      <span className="mt-[7px]"><Caret color={k} /></span>
      <button type="button" aria-label="动态观察" className="mt-1"><Ico size={24}><path d="M12 1l4 4h-2v17h-4V5H8z" stroke={k} /><path d="M20 10c6 2 3 7-8 7H6M7 10c-8 2-8 5-4 6" stroke={k} strokeWidth="1.500" /><path d="M3 17l5-4v7z" fill={k} stroke="none" /></Ico></button>
      <span className="mt-[7px]"><Caret color={k} /></span>
      <span className="mt-1 h-px w-[26px] shrink-0 bg-[#565656]" />
      <button type="button" aria-label="ShowMotion" className="mt-1"><Ico size={24}><path d="M.5 1.500h6v6h-6zM8.500 1.500h6v6h-6zM16.500 1.500h6v6h-6zM.5 10.500h16v13H.5z" stroke={k} strokeWidth="1.300" /><path d="M5 13v8l8-4z" fill={k} stroke="none" /></Ico></button>
      <button type="button" aria-label="导航栏选项" className="mt-auto mr-[2px] mb-px self-end"><Ico size={8}><circle cx="4" cy="4" r="3.500" fill={k} stroke="none" /><path d="M2 3h4M2 5h4" stroke="#555" /></Ico></button>
    </div>
  );
}

function CommandLine() {
  return (
    <div className="absolute inset-x-[232px] bottom-0">
      <div className="flex flex-col items-start gap-[5px] pb-[3px] pl-[62px] font-['Noto_Sans_Mono_CJK_SC','Noto_Sans_CJK_SC',monospace] text-[13px] leading-[15px] whitespace-pre">
        <p className="rounded-[2px] bg-[#484848] px-[3px] text-[#b0b0b0]">命令: *取消*</p>
        <p className="rounded-[2px] bg-[#545454] px-[3px] text-[#d6d6d6]">窗口(W) 套索  按空格键可循环浏览选项</p>
        <p className="rounded-[2px] bg-[#5f5f5f] px-[3px] text-white">命令: 指定对角点或 [栏选(F)/圈围(WP)/圈交(CP)]:</p>
      </div>
      <div className="flex h-7 rounded bg-[#1c222b] pb-[2px]">
        <div className="flex w-14 items-center pl-1">
          <Ico size={18}><path d="M.5 0v18M3 0v18M5.500 0v18" stroke="#aaa" strokeDasharray="2 1" /></Ico>
          <button type="button" aria-label="关闭命令行" className="-ml-2 flex"><Ico size={10}><path d="M1 1l8 8M9 1L1 9" stroke="#b8b8b8" strokeWidth="2" /></Ico></button>
          <button type="button" aria-label="自定义命令行" className="ml-[11px] flex"><Ico size={14}><path d="M1 13l7-7" stroke="#c8c8c8" strokeWidth="2.500" /><path d="M7 6c-1-3 1-6 4-6l-2 3 2 2 3-2c0 3-3 5-6 4z" fill="#c8c8c8" stroke="none" /></Ico></button>
        </div>
        <div className="mt-px flex flex-1 items-center rounded-[2px] bg-[#b2b2b2] pr-1 pl-1">
          <button type="button" aria-label="近期使用的命令" className="flex items-center gap-[2px]">
            <Ico><rect x=".5" y="2.500" width="15" height="11" stroke="#444" /><path d="M0 2h16v3H0z" fill="#444" stroke="none" /><path d="M3 6.500l2 2-2 2M6.500 10.500h4" stroke="#444" /></Ico>
            <Caret big color="#444" />
          </button>
          <input aria-label="命令" placeholder="键入命令" className="ml-2 h-5 flex-1 bg-transparent text-[13px] text-black italic outline-none placeholder:text-[#555] placeholder:italic" />
          <button type="button" aria-label="展开历史" className="flex"><svg width="7" height="4" aria-hidden="true"><path d="M0 4h7L3.500 0z" fill="#444" /></svg></button>
        </div>
      </div>
    </div>
  );
}

function Canvas() {
  return (
    <main className="relative min-w-0 flex-1 overflow-hidden bg-black">
      <svg className="absolute inset-0 h-full w-full" fill="none" aria-hidden="true" shapeRendering="crispEdges">
        <path d="M107.500 0v2000M491.500 0v2000M876.500 0v2000M1260.500 0v2000M0 207.500h3000M0 592.500h3000" stroke="#14161b" />
        <path d="M223 237.500h97M271.500 189v97" stroke="#fff" />
        <rect x="268.500" y="234.500" width="6" height="6" fill="#000" stroke="#fff" />
      </svg>
      <Entity text="AG5208" pos="top-[286px] left-[660px]" />
      <Entity text="AG5209" pos="top-[345px] left-[677px]" />
      <Entity text="AG5211" pos="top-[259px] left-[853px]" />
      <Entity text="AG5210" pos="top-[332px] left-[849px]" />

      <div className="absolute top-[9px] right-[11px] flex items-center gap-[10px]">
        <button type="button" aria-label="最小化图形" className="mt-1 h-[3px] w-2.5 bg-white" />
        <button type="button" aria-label="还原图形" className="flex"><Ico size={11}><path d="M3 2V1h7v7H9" stroke="#fff" strokeWidth="1.500" /><path d="M1 3h6v6H1z" stroke="#fff" strokeWidth="2" /></Ico></button>
        <button type="button" aria-label="关闭图形窗口" className="flex"><Ico size={10}><path d="M1 1l8 8M9 1L1 9" stroke="#fff" strokeWidth="2.500" /></Ico></button>
      </div>
      <ViewCube />
      <NavBar />

      <svg className="absolute bottom-[3px] left-[12px]" width="80" height="80" viewBox="0 0 80 80" fill="none" stroke="#e6e6e6" aria-hidden="true">
        <path d="M8.500 12v50M8.500 62.500h51M3.500 57.500h10v10h-10z" shapeRendering="crispEdges" />
      </svg>
      <span className="absolute bottom-[73px] left-[22px] font-['Lato',sans-serif] text-[18px] leading-5 font-light text-[#e6e6e6]">Y</span>
      <span className="absolute bottom-[20px] left-[76px] font-['Lato',sans-serif] text-[18px] leading-5 font-light text-[#e6e6e6]">X</span>

      <CommandLine />
    </main>
  );
}

/* ---------- status bar ---------- */

function St({ w = 'w-6', on, name, children }: { w?: string; on?: boolean; name: string; children: ReactNode }) {
  return (
    <button type="button" aria-label={name} className={`flex h-6 shrink-0 items-center justify-center ${w} ${on ? 'bg-[#5b8cc4]' : ''}`}>{children}</button>
  );
}
function Group({ m, children }: { m: string; children: ReactNode }) {
  return <div className={`flex shrink-0 bg-[#3b4453] ${m}`}>{children}</div>;
}
const compass = <path d="M7 1l2.500 8.500 4 4.500-3 1-1.500-2H5l-1.500 2-3-1 4-4.500z" fill="#e8e8e8" stroke="none" />;

function StatusBar() {
  return (
    <footer className="flex h-[29px] shrink-0 border-t border-[#4a5361] bg-[#222933]">
      <div className="flex h-[17px] pl-[12px] text-[#b5b8bd]">
        <button type="button" className="w-[46px] rounded-b-[8px] bg-[#3b4453] font-bold leading-4 text-[#f2f2f2]">模型</button>
        <button type="button" className="ml-[3px] w-[49px] rounded-b-[8px] bg-[#2d3541] leading-4">布局1</button>
        <button type="button" className="ml-[5px] w-[49px] rounded-b-[8px] bg-[#2d3541] leading-4">布局2</button>
        <button type="button" aria-label="新建布局" className="ml-[7px] flex h-[15px] w-[22px] items-center justify-center rounded-br-[10px] rounded-tl-[10px] bg-[#2d3541]"><Ico size={8}><path d="M4 0v8M0 4h8" stroke="#b5b5b5" strokeWidth="1.500" /></Ico></button>
      </div>
      <div className="flex flex-1 justify-end pt-px pr-[2px]">
        <Group m=""><St name="模型空间" w="w-[27px] pl-[2px]">模型</St></Group>
        <Group m="ml-1">
          <St name="栅格" on w="w-[22px]"><Ico><path d="M3.500 0v16M8 0v16M12.500 0v16M0 3.500h16M0 8h16M0 12.500h16" stroke="#fff" strokeWidth="1.200" /></Ico></St>
          <St name="捕捉"><Ico size={14}><path d="M1 1.500h12M1 7h12M1 12.500h12" strokeWidth="2" strokeDasharray="2 3" /></Ico></St>
          <St name="捕捉设置" w="w-[17px]"><Caret big /></St>
        </Group>
        <Group m="ml-[3px]">
          <St name="正交"><Ico><path d="M2 0v14h14M2 9h5v5" strokeWidth="1.500" /></Ico></St>
          <St name="极轴追踪"><Ico><circle cx="7" cy="9" r="6" /><path d="M7 9l8-8M7 9h8M10 3l3 1 1 4" /></Ico></St>
          <St name="极轴设置" w="w-4"><Caret big /></St>
          <St name="等轴测草图"><Ico><path d="M1 1l14 13" stroke="#e06a6a" /><path d="M8 0v16" stroke={G} /><rect x="7" y="6" width="3" height="3" fill="#fff" stroke="none" /></Ico></St>
          <St name="等轴测设置" w="w-4"><Caret big /></St>
        </Group>
        <Group m="ml-px">
          <St name="对象捕捉追踪" w="w-[25px]"><Ico><path d="M15 2L2 14h14" strokeWidth="1.300" /><circle cx="8" cy="8.500" r="1.500" fill={W} /></Ico></St>
          <St name="对象捕捉" on w="w-[22px]"><Ico><path d="M6 2.500h9.500v13h-13V6" stroke="#fff" strokeWidth="1.200" /><rect x=".5" y=".5" width="4" height="4" stroke="#fff" /></Ico></St>
          <St name="对象捕捉设置" w="w-[17px]"><Caret big /></St>
        </Group>
        <Group m="ml-[2px]">
          <St name="选择循环" on w="w-[22px]"><Ico><path d="M3.500 8v4M7 4.500h6.500v2M4.500 12.500h1" stroke="#fff" /><path d="M6 7h10v9H6z" fill="#fff" stroke="none" /><path d="M3 0v6M0 3h6" stroke="#fff" strokeWidth="1.300" /></Ico></St>
        </Group>
        <Group m="ml-1">
          <St name="注释可见性" on w="w-[23px]"><Ico>{compass}<circle cx="13" cy="4" r="2.500" stroke="#fff" /></Ico></St>
          <St name="自动缩放" w="w-[25px]"><Ico>{compass}<path d="M14 0l-3 4h2l-1 4 4-5h-2z" fill={W} stroke="none" /></Ico></St>
          <St name="注释比例图标"><Ico>{compass}</Ico></St>
          <St name="注释比例" w="w-[34px]"><span className="mr-1">1:1</span><Caret big /></St>
        </Group>
        <Group m="ml-[3px]">
          <St name="工作空间"><Ico><circle cx="8" cy="8" r="4" strokeWidth="3" stroke="#e8e8e8" /><path d="M8 0v3M8 13v3M0 8h3M13 8h3M2.500 2.500l2 2M11.500 11.500l2 2M13.500 2.500l-2 2M4.500 11.500l-2 2" strokeWidth="2.500" stroke="#e8e8e8" /></Ico></St>
          <St name="工作空间设置" w="w-4"><Caret big /></St>
        </Group>
        <Group m="ml-px"><St name="注释监视器"><Ico><path d="M8 0v16M0 8h16" strokeWidth="2" stroke="#e8e8e8" /></Ico></St></Group>
        <Group m="ml-[3px]"><St name="隔离对象"><Ico><rect x=".5" y=".5" width="6" height="6" strokeWidth="1.300" /><circle cx="12.500" cy="7" r="3" strokeWidth="1.300" /><path d="M6 10l3 5.500H3z" strokeWidth="1.300" /></Ico></St></Group>
        <Group m="ml-[3px]">
          <St name="全屏显示"><Ico><rect x=".5" y="2.500" width="15" height="12" strokeWidth="1.300" /><path d="M10 5h3.500v3.500zM6 12H2.500V8.500z" fill={W} /></Ico></St>
          <St name="自定义"><Ico><path d="M0 2h16M0 8h16M0 14h16" strokeWidth="2" stroke="#e8e8e8" /></Ico></St>
        </Group>
      </div>
    </footer>
  );
}

export default function App() {
  return (
    <div className="flex h-screen flex-col overflow-hidden bg-[#222933] font-['Open_Sans','Noto_Sans_CJK_SC',sans-serif] text-[12px] leading-4 text-[#e8e8e8]">
      <div className="flex min-h-0 flex-1">
        <div className="flex min-w-0 flex-1 flex-col">
          <Header />
          <Ribbon />
          <DocTabs />
          <div className="h-1 shrink-0 bg-[#3f4857]" />
          <div className="flex min-h-0 flex-1">
            <Palette />
            <Canvas />
          </div>
          <StatusBar />
        </div>
        <div className="flex w-2 shrink-0 flex-col overflow-hidden bg-[#f5f6f8]">
          <div className="h-8 border-b border-[#8a8a8a] bg-[#c6c4c4]" />
          <div className="h-[70px] border-b border-[#d9dbde] bg-[#fafafa] pt-2 pl-[3px]"><div className="size-[26px] rounded-full border border-[#d0d0d0]" /></div>
        </div>
      </div>
      <div className="flex h-2 shrink-0 overflow-hidden bg-[#231c22] pl-12">
        <div className="w-[344px] border-t border-[#b9b9b9] bg-[#f1f1f1]" />
        <div className="ml-[443px] w-12 bg-[#353134]" />
        <div className="flex flex-1 justify-end pr-[12px]">
          <span className="mr-[69px] pt-[2px] text-white">15:08</span>
          <span className="w-px bg-[#8a8488]" />
        </div>
      </div>
    </div>
  );
}
